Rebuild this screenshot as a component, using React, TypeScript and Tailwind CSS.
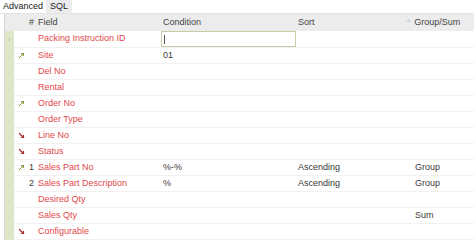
import React from "react";

type Row = {
  field: string;
  mark?: "up" | "down";
  num?: string;
  cond?: string;
  sort?: string;
  group?: string;
  input?: boolean;
  current?: boolean;
};

const rows: Row[] = [
  { field: "Packing Instruction ID", input: true, current: true },
  { field: "Site", mark: "up", cond: "01" },
  { field: "Del No" },
  { field: "Rental" },
  { field: "Order No", mark: "up" },
  { field: "Order Type" },
  { field: "Line No", mark: "down" },
  { field: "Status", mark: "down" },
  { field: "Sales Part No", mark: "up", num: "1", cond: "%-%", sort: "Ascending", group: "Group" },
  { field: "Sales Part Description", num: "2", cond: "%", sort: "Ascending", group: "Group" },
  { field: "Desired Qty" },
  { field: "Sales Qty", group: "Sum" },
  { field: "Configurable", mark: "down" },
];

const cols = "grid grid-cols-[12px_10px_125px_135px_109px_1fr]";

const Mark = ({ dir }: { dir?: "up" | "down" }) => {
  if (!dir) return null;
  return dir === "up" ? (
    <svg width="7" height="7" viewBox="0 0 7 7" className="ml-[4px]">
      <path d="M1 6 L5.5 1.5" stroke="#7a9a3a" strokeWidth="1" />
      <path d="M3 1.5 H5.5 V4" stroke="#7a9a3a" strokeWidth="1" fill="none" />
    </svg>
  ) : (
    <svg width="7" height="7" viewBox="0 0 7 7" className="ml-[4px]">
      <path d="M1 1 L5.5 5.5" stroke="#b03030" strokeWidth="1.2" />
      <path d="M3 5.5 H5.5 V3" stroke="#b03030" strokeWidth="1.2" fill="none" />
    </svg>
  );
};

export default function App() {
  return (
    <div className="w-[474px] h-[241px] bg-white overflow-hidden text-[9px] text-[#3a3a3a] font-['Liberation_Sans',Arial,sans-serif]">
      <div className="flex items-end h-[14px] border-b border-[#e4e4e4]">
        <span className="pl-[3px] pr-[3px] leading-[13px] text-[#222]">Advanced</span>
        <span className="bg-[#ececec] px-[4px] leading-[13px] text-[#222]">SQL</span>
      </div>
      <div className="ml-[4px] border-l border-[#d6d6d6]">
        <div className="grid grid-cols-[9px_12px_10px_125px_135px_109px_1fr] h-[17px] items-center bg-[#ececec] text-[#444]">
          <span />
          <span />
          <span className="text-right pr-[2px]">#</span>
          <span className="pl-[2px]">Field</span>
          <span className="pl-[2px]">Condition</span>
          <span className="pl-[2px]">Sort</span>
          <span className="flex items-center gap-[4px] pl-[2px]">
            <span className="text-[#aaa] text-[7px]">^</span>
            <span>Group/Sum</span>
          </span>
        </div>
        <div className="flex h-[209px]">
          <div className="w-[9px] shrink-0 bg-[#dde6c6] text-[#a8b98a] text-[7px] leading-[17px] text-center">
            ›
          </div>
          <div className="flex-1">
            {rows.map((r) => (
              <div
                key={r.field}
                className={`${cols} ${r.input ? "h-[17px]" : "h-[16px]"} items-center border-b border-[#f1f1f1]`}
              >
                <span className="flex items-center">
                  <Mark dir={r.mark} />
                </span>
                <span className="text-right pr-[2px]">{r.num}</span>
                <span className="pl-[2px] text-[#e2474d]">{r.field}</span>
                {r.input ? (
                  <div className="self-stretch border border-[#c5cea2] bg-white flex items-center pl-[2px]">
                    <span className="w-px h-[9px] bg-[#555]" />
                  </div>
                ) : (
                  <span className="pl-[2px]">{r.cond}</span>
                )}
                <span className="pl-[2px]">{r.sort}</span>
                <span className="pl-[10px]">{r.group}</span>
              </div>
            ))}
          </div>
        </div>
      </div>
    </div>
  );
}
